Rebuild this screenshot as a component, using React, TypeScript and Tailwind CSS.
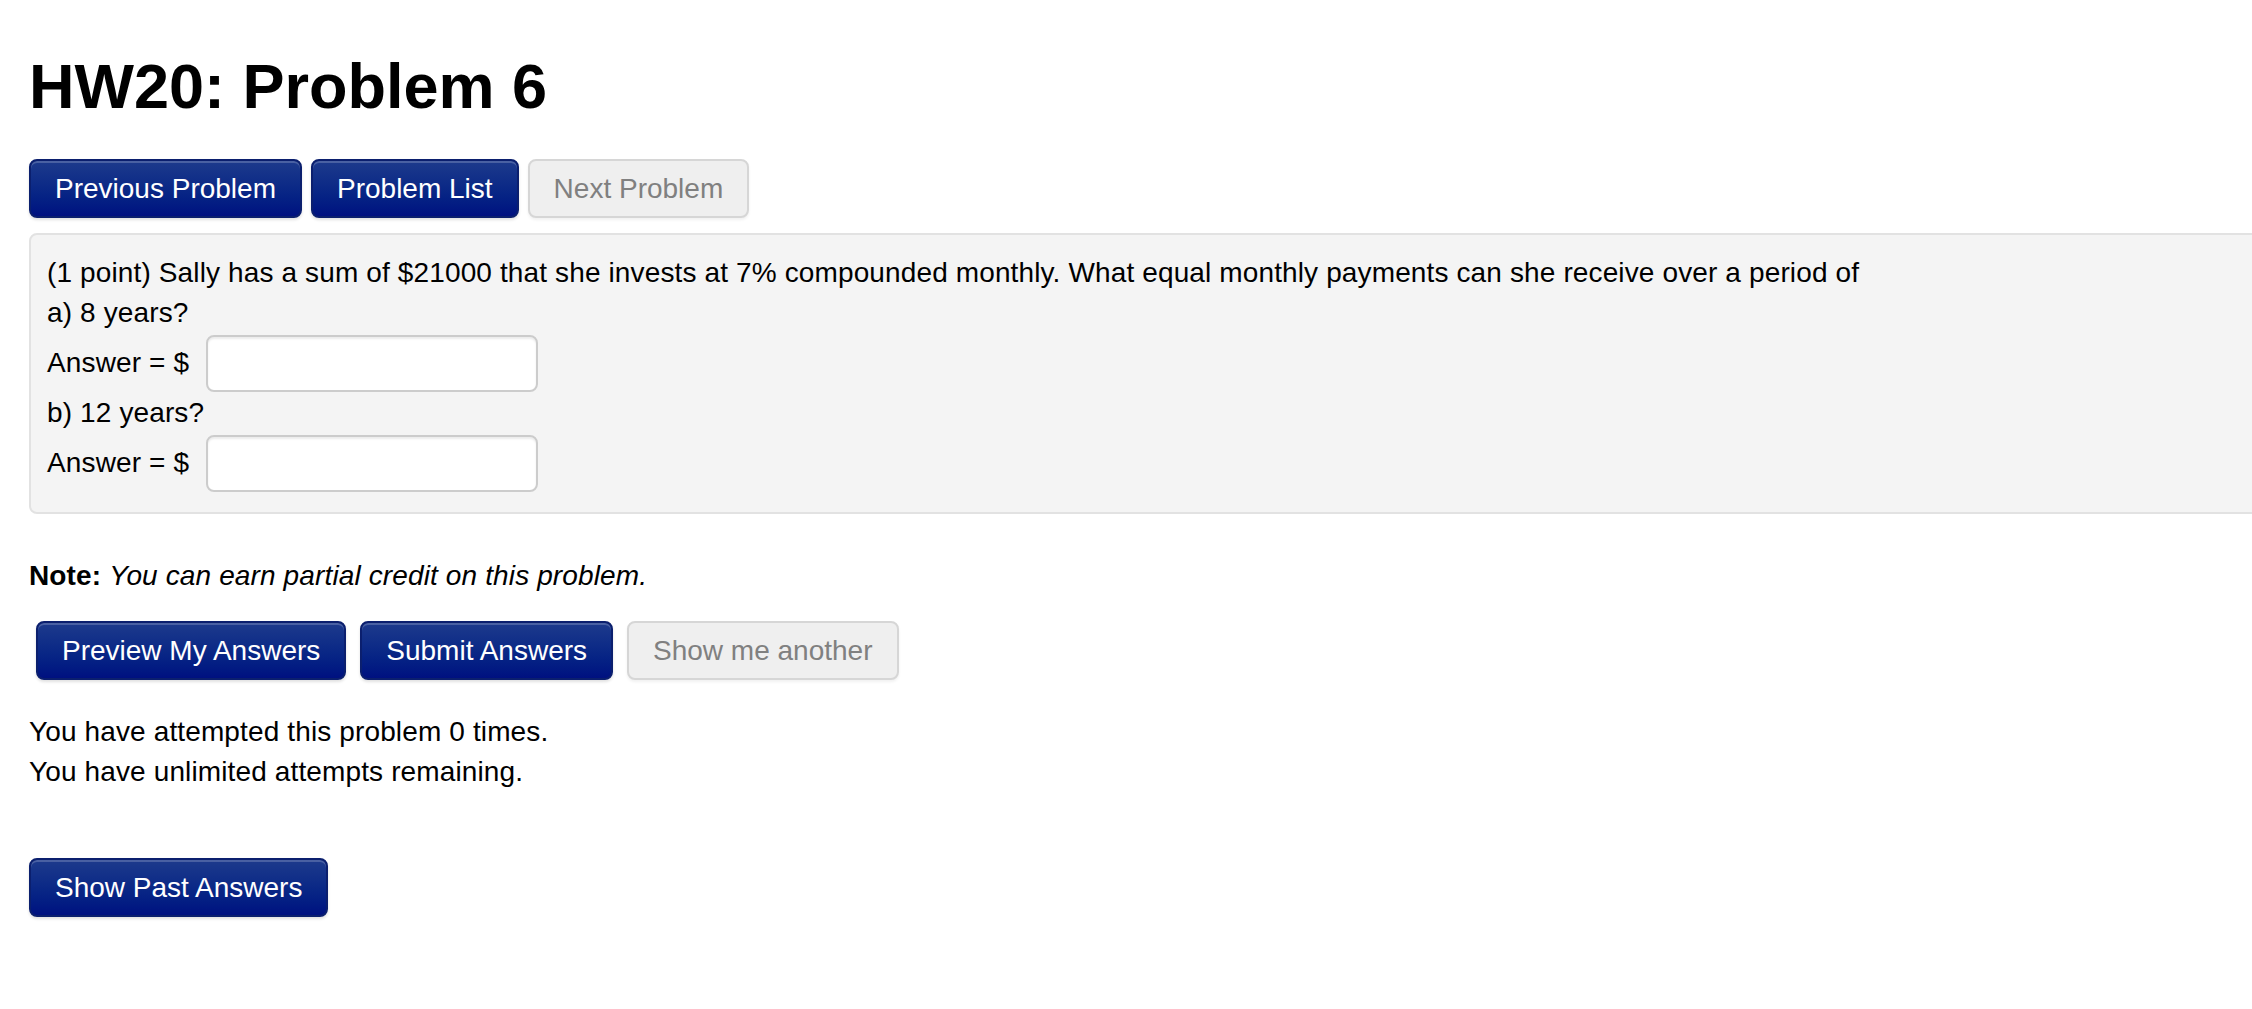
import React from 'react';

const primaryBtn =
  "h-[59px] px-[24px] rounded-[8px] border-2 border-[#0b1f6e] bg-gradient-to-b from-[#1d3a8c] to-[#001080] text-white text-[28px] leading-[40px] tracking-normal shadow-[inset_0_2px_0_rgba(255,255,255,0.2),0_2px_3px_rgba(0,0,0,0.12)] whitespace-nowrap";
const disabledBtn =
  "h-[59px] px-[24px] rounded-[8px] border-2 border-[#d6d6d6] bg-[#efefef] text-[#808080] text-[28px] leading-[40px] tracking-normal shadow-[0_2px_3px_rgba(0,0,0,0.06)] whitespace-nowrap";

const AnswerRow: React.FC = () => (
  <div className="flex items-center gap-[17px] h-[56px] my-[2px]">
    <span>Answer = $</span>
    <input
      type="text"
      className="w-[332px] h-[57px] bg-white border-2 border-[#cccccc] rounded-[8px] shadow-[inset_0_2px_2px_rgba(0,0,0,0.08)] outline-none px-3"
    />
  </div>
);

export default function App() {
  return (
    <div
      className="min-h-screen bg-white text-black text-[28px] leading-[40px] tracking-[0.13px] pl-[29px] overflow-hidden"
      style={{ fontFamily: '"Liberation Sans", Arial, sans-serif' }}
    >
      <h1 className="pt-[52px] text-[63px] leading-[69px] font-bold tracking-normal">HW20: Problem 6</h1>

      <div className="flex gap-[9px] mt-[38px]">
        <button className={primaryBtn}>Previous Problem</button>
        <button className={primaryBtn}>Problem List</button>
        <button className={disabledBtn}>Next Problem</button>
      </div>

      <div className="mt-[15px] w-[2400px] bg-[#f4f4f4] border-2 border-[#e2e2e2] rounded-[8px] pl-[16px] pt-[18px] pb-[19px]">
        <div>
          (1 point) Sally has a sum of $21000 that she invests at 7% compounded monthly. What equal monthly payments can she receive over a period of
        </div>
        <div>a) 8 years?</div>
        <AnswerRow />
        <div>b) 12 years?</div>
        <AnswerRow />
      </div>

      <p className="mt-[42px]">
        <b>Note:</b> <i>You can earn partial credit on this problem.</i>
      </p>

      <div className="flex gap-[14px] mt-[25px] ml-[7px]">
        <button className={primaryBtn}>Preview My Answers</button>
        <button className={primaryBtn}>Submit Answers</button>
        <button className={disabledBtn}>Show me another</button>
      </div>

      <div className="mt-[32px]">
        <div>You have attempted this problem 0 times.</div>
        <div>You have unlimited attempts remaining.</div>
      </div>

      <div className="mt-[66px]">
        <button className={primaryBtn}>Show Past Answers</button>
      </div>
    </div>
  );
}
